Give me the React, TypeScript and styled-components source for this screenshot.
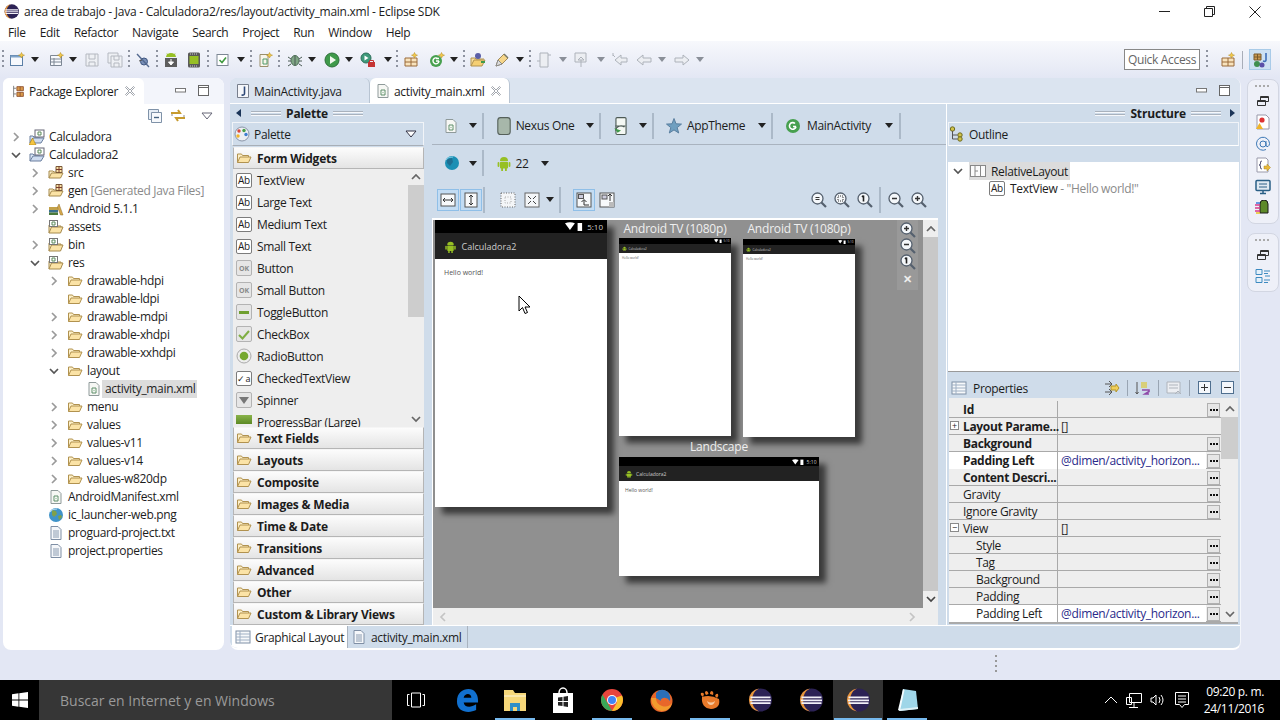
import React from "react";
import styled, { createGlobalStyle } from "styled-components";

const BLUE = "#cfdcea";
const FONT = `"Open Sans", "Liberation Sans", sans-serif`;

const Global = createGlobalStyle`
  html, body { margin: 0; padding: 0; background: #e3e7f4; }
  * { box-sizing: border-box; }
`;

/* ---------- icons ---------- */

const Ic = styled.svg`
  display: block;
  flex-shrink: 0;
`;

const icons: Record<string, React.ReactNode> = {
  folder: (
    <>
      <path d="M1.5 12.5V4h4l1 1.500h6V7" fill="#fdf0c8" stroke="#b1924f" />
      <path d="M1.5 12.5 4 7h11l-2.500 5.500z" fill="#fbe3a6" stroke="#b1924f" />
    </>
  ),
  pkgFolder: (
    <>
      <path d="M1 13V6h4l1 1h7v1" fill="#fdf0c8" stroke="#a68a4d" />
      <path d="M1 13l2.500-5H15l-2.500 5z" fill="#fbe3a6" stroke="#a68a4d" />
      <path d="M8 1.500h6v6H8z" fill="#fbe3a6" stroke="#7a5a3a" />
      <path d="M11 1.500v6M8 4.500h6" stroke="#7a3a2a" />
    </>
  ),
  resFolder: (
    <>
      <path d="M1 14V6h4l1 1h7v1" fill="#fdf0c8" stroke="#a68a4d" />
      <path d="M1 14l2.500-6H15l-2.500 6z" fill="#fbe3a6" stroke="#a68a4d" />
      <rect x="1.500" y="1.500" width="8" height="6" fill="#fff" stroke="#777" />
      <path d="M4 3h3v3H4z" fill="none" stroke="#5a8a5a" />
    </>
  ),
  project: (
    <>
      <path d="M1 14V7h3l1 1h6" fill="#dbe6f4" stroke="#6a7f9f" />
      <path d="M1 14l3-5h11l-3 5z" fill="#cfdcf0" stroke="#6a7f9f" />
      <rect x="6" y="1" width="9" height="7" fill="#fff" stroke="#667" />
      <path d="M9 3h3v3H9z" fill="none" stroke="#5a8a5a" />
    </>
  ),
  projectWarn: (
    <>
      <path d="M1 14V7h3l1 1h6" fill="#dbe6f4" stroke="#6a7f9f" />
      <path d="M1 14l3-5h11l-3 5z" fill="#cfdcf0" stroke="#6a7f9f" />
      <rect x="6" y="1" width="9" height="7" fill="#fff" stroke="#667" />
      <path d="M9 3h3v3H9z" fill="none" stroke="#5a8a5a" />
      <path d="M0 16l3.500-7 3.500 7z" fill="#f5c542" stroke="#a87f10" strokeWidth=".6" />
    </>
  ),
  library: (
    <>
      <path d="M1 6h9v3H1z" fill="#c2a14b" />
      <path d="M1 9h9v2.500H1z" fill="#3a6f8f" />
      <path d="M1 11.500h9V14H1z" fill="#4b7a3a" />
      <path d="M11 3l4 11h-2.500L9.500 6z" fill="#d8a94a" stroke="#8a6a2a" strokeWidth=".5" />
    </>
  ),
  xml: (
    <>
      <path d="M3 1.500h7l3 3v10H3z" fill="#f6f7f4" stroke="#8f9a9a" />
      <path d="M6 7h4v5H6z" fill="none" stroke="#5e8f6a" />
      <path d="M6 9.500h4" stroke="#bcd3be" />
    </>
  ),
  doc: (
    <>
      <path d="M3 1.500h7l3 3v10H3z" fill="#f5f7fa" stroke="#7f8fa5" />
      <path d="M5 6h6M5 8h6M5 10h6M5 12h6" stroke="#8a9bb0" />
    </>
  ),
  globe: (
    <>
      <circle cx="8" cy="8" r="7" fill="#3f93c9" />
      <path d="M4 3l4 1 1 3-3 3-2-2zM10 9l3-1 1 2-3 3z" fill="#7fa04a" />
      <path d="M2 5a7 7 0 0 1 7-3" stroke="#bfe1f2" fill="none" />
    </>
  ),
  earth: (
    <>
      <circle cx="8" cy="8" r="7" fill="#1b8fb4" />
      <path d="M3 4l5-1 1 4-3 4-3-3z" fill="#1e6f92" />
      <path d="M2 5a7 7 0 0 1 7-3" stroke="#7fd0ea" fill="none" />
    </>
  ),
  layoutTree: (
    <>
      <rect x=".5" y="2.500" width="15" height="11" fill="#fbfbfb" stroke="#888" />
      <path d="M5 2.500v11M10.500 2.500v11M5 8h3" stroke="#888" />
    </>
  ),
  outline: (
    <>
      <circle cx="3.500" cy="3" r="2.200" fill="#cfc24a" stroke="#6e6a20" />
      <circle cx="11" cy="9" r="2.200" fill="#cfc24a" stroke="#6e6a20" />
      <circle cx="11" cy="13" r="2.200" fill="#cfc24a" stroke="#6e6a20" />
      <path d="M3.500 5v8h5M3.500 9h5" stroke="#555" fill="none" />
    </>
  ),
  palette: (
    <>
      <circle cx="8" cy="8" r="7" fill="#eceff3" stroke="#8a95a8" />
      <circle cx="5" cy="5" r="1.700" fill="#d9483b" />
      <circle cx="10" cy="4.500" r="1.700" fill="#4aa04a" />
      <circle cx="12" cy="8.500" r="1.700" fill="#3f7fd0" />
      <circle cx="4" cy="10" r="1.700" fill="#f0b429" />
    </>
  ),
  pkgExplorer: (
    <>
      <path d="M2 1v14M2 4h3M2 11h3" stroke="#6b6b6b" fill="none" />
      <path d="M6 2h8v5H6zM6 9h8v5H6z" fill="#d89a4a" stroke="#8a4a2a" />
      <path d="M10 2v5M10 9v5" stroke="#8a4a2a" />
    </>
  ),
  collapse: (
    <>
      <path d="M1.500 1.500h10v10h-10z" fill="#e6edf5" stroke="#7f92a8" />
      <path d="M4.500 4.500h10v10h-10z" fill="#f7f9fc" stroke="#7f92a8" />
      <path d="M7 9.500h5" stroke="#44607f" strokeWidth="1.400" />
    </>
  ),
  link: (
    <>
      <path d="M1 5h9l-2-3M15 10H6l2 3" fill="none" stroke="#c79b2e" strokeWidth="2" />
      <path d="M3 7H1M13 8h2" stroke="#8a8a8a" />
    </>
  ),
  newWin: (
    <>
      <rect x="1.500" y="3.500" width="12" height="10" fill="#f7f9fd" stroke="#5b7fa6" />
      <path d="M1.500 3.500h12v2h-12z" fill="#7fa3c8" />
      <path d="M12.500 .5l1 2 2 .7-2 .8-1 2-1-2-2-.8 2-.7z" fill="#f2c94c" stroke="#b58a1a" strokeWidth=".5" />
    </>
  ),
  newList: (
    <>
      <path d="M2.500 3.500h11v10h-11z" fill="#f7f9fd" stroke="#7d8794" />
      <path d="M6 6v7M2.500 7h11M2.500 10h11" stroke="#7d8794" />
      <path d="M12.500 .5l1 2 2 .7-2 .8-1 2-1-2-2-.8 2-.7z" fill="#f2c94c" stroke="#b58a1a" strokeWidth=".5" />
    </>
  ),
  save: (
    <>
      <path d="M2 2h12v12H2z" fill="#eef0f4" stroke="#b4b8c0" />
      <path d="M5 2v5h6V2M5 14v-4h6v4" fill="none" stroke="#b4b8c0" />
    </>
  ),
  saveAll: (
    <>
      <path d="M1 1h10v10H1z" fill="#eef0f4" stroke="#b4b8c0" />
      <path d="M4 4h11v11H4z" fill="#eef0f4" stroke="#b4b8c0" />
      <path d="M7 4v4h5V4M7 15v-4h5v4" fill="none" stroke="#b4b8c0" />
    </>
  ),
  skip: (
    <>
      <circle cx="9" cy="9.500" r="3.500" fill="#7a90b8" stroke="#3f5680" />
      <path d="M2 2l12 13" stroke="#54698f" strokeWidth="1.400" />
      <path d="M4 9l3-1" stroke="#555" />
    </>
  ),
  sdk: (
    <>
      <path d="M3 5a5 4 0 0 1 10 0z" fill="#97c024" />
      <path d="M4 1.500l1.500 2M12 1.500l-1.500 2" stroke="#97c024" />
      <rect x="2" y="6" width="12" height="9" fill="#5d5d5d" />
      <path d="M8 7v5M5.500 10L8 13l2.500-3z" fill="#fff" stroke="#fff" />
    </>
  ),
  avd: (
    <>
      <rect x="2" y="0.500" width="12" height="15" rx="1.500" fill="#5a5a5a" />
      <rect x="3.500" y="4" width="9" height="8" fill="#97c024" />
      <path d="M4 2h8M4 14h8" stroke="#cfcfcf" strokeDasharray="1 1" />
    </>
  ),
  check: (
    <>
      <rect x="2" y="2.500" width="11" height="11" fill="#fff" stroke="#7d8794" />
      <path d="M4.500 8l2.500 2.500 4-5" stroke="#3f9a3f" strokeWidth="1.600" fill="none" />
    </>
  ),
  newXml: (
    <>
      <path d="M3 2.500h8v12H3z" fill="#f8f5ea" stroke="#9a8f6a" />
      <path d="M6 7h4v5H6z" fill="none" stroke="#4e9a6a" />
      <path d="M12.500 .5l1 2 2 .7-2 .8-1 2-1-2-2-.8 2-.7z" fill="#f2c94c" stroke="#b58a1a" strokeWidth=".5" />
    </>
  ),
  bug: (
    <>
      <ellipse cx="8" cy="8.500" rx="4" ry="5" fill="#7fa585" stroke="#4b6b55" />
      <path d="M1 5l3 2M1 9h3M1 14l3-2M15 5l-3 2M15 9h-3M15 14l-3-2M8 4v9" stroke="#4b5b55" />
    </>
  ),
  run: (
    <>
      <circle cx="8" cy="8" r="7" fill="#3f9a4a" stroke="#2e6f3a" />
      <path d="M6 4l6 4-6 4z" fill="#f2f8ee" />
    </>
  ),
  runExt: (
    <>
      <circle cx="6" cy="6" r="5" fill="#3f9a7a" stroke="#2e6f5a" />
      <path d="M4.500 3.500l4 2.500-4 2.500z" fill="#fff" />
      <rect x="8" y="10" width="7" height="5" fill="#c53434" />
      <path d="M9.500 10V8.500h4V10" stroke="#c53434" fill="none" />
    </>
  ),
  perspective: (
    <>
      <path d="M2 6h12v8H2z" fill="#f8e3bd" stroke="#9a6a3a" />
      <path d="M8 6v8M2 10h12" stroke="#9a6a3a" />
      <path d="M11.500 .5l1 2 2 .7-2 .8-1 2-1-2-2-.8 2-.7z" fill="#f2c94c" stroke="#b58a1a" strokeWidth=".5" />
    </>
  ),
  gNew: (
    <>
      <circle cx="7" cy="9" r="6" fill="#47a04f" />
      <path d="M7 6.500h3M10 9H7M10 9a3 3 0 1 1-1-2.400" stroke="#fff" fill="none" strokeWidth="1.400" />
      <path d="M12.500 .5l1 2 2 .7-2 .8-1 2-1-2-2-.8 2-.7z" fill="#f2c94c" stroke="#b58a1a" strokeWidth=".5" />
    </>
  ),
  gClass: (
    <>
      <circle cx="8" cy="8" r="7" fill="#47a04f" />
      <path d="M11 8.500H8M11 8.500a3.300 3.300 0 1 1-1-3" stroke="#fff" fill="none" strokeWidth="1.600" />
    </>
  ),
  open: (
    <>
      <path d="M1 14V6h4l1 1h8" fill="#f7df9f" stroke="#b1924f" />
      <path d="M1 14l3-6h11l-3 6z" fill="#f5cf73" stroke="#b1924f" />
      <circle cx="8" cy="4" r="3" fill="#5b5fa8" />
      <path d="M11 10h4" stroke="#3f9a4a" strokeWidth="2" />
    </>
  ),
  pencil: (
    <>
      <path d="M2 14l2-6 6-6 4 4-6 6z" fill="#f6d68a" stroke="#a08a5a" />
      <path d="M2 14l2-6 4 4z" fill="#ddd" stroke="#888" />
      <path d="M10 2l4 4" stroke="#776" strokeWidth="1.500" />
    </>
  ),
  navDown: <path d="M4 1h8v14H4zM1 9h3M12 3h3" fill="#eceef2" stroke="#adb2ba" />,
  navUp: (
    <>
      <path d="M2 1h11v9H2z" fill="#eceef2" stroke="#adb2ba" />
      <path d="M8 15V8H5l3-3 3 3H8" fill="#eceef2" stroke="#adb2ba" />
    </>
  ),
  navBack: <path d="M3 8l6-5v3h6v4H9v3zM1 3l2 2M1 1v3" fill="#eceef2" stroke="#adb2ba" />,
  left: <path d="M1 8l6-5v3h8v4H7v3z" fill="#eceef2" stroke="#adb2ba" />,
  right: <path d="M15 8L9 3v3H1v4h8v3z" fill="#eceef2" stroke="#adb2ba" />,
  javaPersp: (
    <>
      <path d="M2 2h7v6H2z" fill="#c99a52" stroke="#7a5a2a" />
      <path d="M5.500 2v6M2 5h7" stroke="#7a5a2a" />
      <circle cx="5" cy="12" r="3" fill="#3f8f4f" />
      <circle cx="10" cy="13" r="2.500" fill="#5a4fa8" />
      <path d="M14 1v7q0 2-3 1" stroke="#3f6fb8" strokeWidth="1.600" fill="none" />
    </>
  ),
  java: (
    <>
      <path d="M2.500 1.500h11v13h-11z" fill="#f5f7fa" stroke="#777f8c" />
      <path d="M9.500 3.500v7q0 2-3 1.500" stroke="#2f4a78" strokeWidth="1.600" fill="none" />
    </>
  ),
  phone: <rect x="2.500" y=".5" width="11" height="15" rx="2.500" fill="#a7b7aa" stroke="#55605a" />,
  rotate: (
    <>
      <rect x="3.500" y=".5" width="9" height="15" rx="1" fill="#f4f8f4" stroke="#4d5a55" />
      <path d="M3 8h9M3 12a5 5 0 0 1 8-3" stroke="#4d5a55" fill="none" />
      <path d="M2 10l3 4 3-2" fill="#3f9a4a" />
    </>
  ),
  star: (
    <path d="M8 .5l2 5.300 5.500.3-4.300 3.500 1.500 5.400L8 11.900l-4.700 3.100 1.500-5.400L.5 6.100 6 5.800z" fill="#6f9fc0" stroke="#5a7f9f" />
  ),
  android: (
    <>
      <path d="M4 6a4 4 0 0 1 8 0z" fill="#97c024" />
      <rect x="4" y="6.800" width="8" height="6.700" rx="1" fill="#97c024" />
      <rect x="1.600" y="7" width="1.800" height="5" rx=".9" fill="#97c024" />
      <rect x="12.600" y="7" width="1.800" height="5" rx=".9" fill="#97c024" />
      <rect x="5.200" y="13" width="1.800" height="3" fill="#97c024" />
      <rect x="9" y="13" width="1.800" height="3" fill="#97c024" />
    </>
  ),
  fitH: (
    <>
      <rect x="1" y="2" width="14" height="12" fill="#f7f9fb" stroke="#555" />
      <path d="M3 8h10M3 8l2-2M3 8l2 2M13 8l-2-2M13 8l-2 2" stroke="#333" fill="none" />
    </>
  ),
  fitV: (
    <>
      <rect x="2" y="1" width="12" height="14" fill="#f7f9fb" stroke="#555" />
      <path d="M8 3v10M8 3L6 5M8 3l2 2M8 13l-2-2M8 13l2-2" stroke="#333" fill="none" />
    </>
  ),
  marquee: (
    <>
      <rect x="1" y="1" width="14" height="14" fill="#f4f6f8" stroke="#666" strokeDasharray="1 1.500" />
      <path d="M5 5h6v6H5z" fill="none" stroke="#aaa" strokeDasharray="1 1.500" />
    </>
  ),
  expand: (
    <>
      <rect x="1" y="1" width="14" height="14" fill="#f4f6f8" stroke="#666" />
      <path d="M4 4l3 3M12 4L9 7M4 12l3-3M12 12L9 9" stroke="#444" />
    </>
  ),
  parent: (
    <>
      <rect x="1" y="1" width="14" height="14" fill="#f7f9fb" stroke="#555" />
      <rect x="2.500" y="2.500" width="5" height="4" fill="#ccd" stroke="#555" />
      <path d="M8 13V8M5.500 10L8 7.500 10.500 10M8 13h5" stroke="#333" fill="none" />
    </>
  ),
  parent2: (
    <>
      <rect x="1" y="1" width="14" height="14" fill="#f7f9fb" stroke="#555" />
      <rect x="3" y="3" width="5" height="4" fill="#ccd" stroke="#555" />
      <rect x="10" y="10" width="5" height="5" fill="#bbb" />
      <path d="M11 9V2M9 4l2-2 2 2" stroke="#333" fill="none" />
    </>
  ),
  zoomEq: <ZoomShape><path d="M4.500 5.500h4M4.500 7.500h4" stroke="#333" strokeWidth="1.200" /></ZoomShape>,
  zoomFit: <ZoomShape><path d="M4 4h5v5H4z" stroke="#333" strokeDasharray="1 1" fill="none" /></ZoomShape>,
  zoomOne: <ZoomShape><path d="M6.500 3.500v6M5 5l1.500-1.500" stroke="#222" strokeWidth="1.600" fill="none" /></ZoomShape>,
  zoomOut: <ZoomShape><path d="M4 6.500h5" stroke="#333" strokeWidth="1.400" /></ZoomShape>,
  zoomIn: <ZoomShape><path d="M4 6.500h5M6.500 4v5" stroke="#333" strokeWidth="1.400" /></ZoomShape>,
  propList: (
    <>
      <rect x="1" y="2" width="14" height="12" fill="#f7f9fb" stroke="#7f8fa5" />
      <path d="M1 5h14M1 8h14M1 11h14M5 2v12" stroke="#9fb0c4" />
    </>
  ),
  propSwap: (
    <>
      <path d="M1 4h6M1 12h6M5 1l3 3-3 3M5 9l3 3-3 3" stroke="#555" fill="none" />
      <path d="M7 6h5V4l3 4-3 4v-2H7z" fill="#f0cf5a" stroke="#b3952a" />
    </>
  ),
  propSort: (
    <>
      <path d="M2 2v12M2 14l-1.500-2M2 14l1.500-2" stroke="#555" fill="none" />
      <path d="M6 2h6v6H6z" fill="#d8cf7a" />
      <path d="M7 10h7v1.500l-4 2.500h4" stroke="#8f4aa8" strokeWidth="1.600" fill="none" />
    </>
  ),
  propUndo: (
    <>
      <path d="M1 2h13v11H1z" fill="#eceef2" stroke="#aeb4bc" />
      <path d="M3 5h9M3 8h9M9 14l3-3 3 3" stroke="#aeb4bc" fill="none" />
    </>
  ),
  plusBox: (
    <>
      <rect x="1.500" y="1.500" width="12" height="12" fill="#f4f7fb" stroke="#4f6f8f" />
      <path d="M4 7.500h7M7.500 4v7" stroke="#333" />
    </>
  ),
  minusBox: (
    <>
      <rect x="1.500" y="1.500" width="12" height="12" fill="#f4f7fb" stroke="#4f6f8f" />
      <path d="M4 7.500h7" stroke="#333" />
    </>
  ),
  restoreSmall: (
    <>
      <path d="M5.500 3.500h8v5h-8z" fill="none" stroke="#333" />
      <path d="M2.500 7.500h8v5h-8z" fill="#eef0f8" stroke="#333" />
      <path d="M2.500 8.500h8M5.500 4.500h8" stroke="#333" />
    </>
  ),
  problems: (
    <>
      <path d="M2 1h9l3 3v11H2z" fill="#fff" stroke="#99a" />
      <circle cx="7" cy="6" r="2.600" fill="#d33" />
      <path d="M1 15l3.500-6L8 15z" fill="#f0b429" />
    </>
  ),
  at: (
    <>
      <circle cx="8" cy="8" r="3" fill="none" stroke="#3d78b5" />
      <path d="M11 5v4q0 2 2 1.500 1.500-1 1.500-3A6.500 6.500 0 1 0 11 13.500" fill="none" stroke="#3d78b5" />
    </>
  ),
  javadoc: (
    <>
      <path d="M2 1h9l2 2v12H2z" fill="#fff" stroke="#99a" />
      <path d="M7 4Q5 4 5.500 6T4 8q2 0 1.500 2T7 12" stroke="#557" fill="none" />
      <path d="M9 9h3V7l3.500 3.500L12 14v-2H9z" fill="#e9b93a" stroke="#a8862a" strokeWidth=".5" />
    </>
  ),
  console: (
    <>
      <rect x="1" y="1.500" width="14" height="10" rx="1" fill="#dfe9f2" stroke="#2a5f86" strokeWidth="1.500" />
      <path d="M4 5h8M4 8h8" stroke="#2a5f86" />
      <path d="M5 14.500h6M8 12v2" stroke="#2a5f86" strokeWidth="1.500" />
    </>
  ),
  logcat: (
    <>
      <path d="M5 4a4 4 0 0 1 8 0v9H5z" fill="#5e8a2a" stroke="#1a1a1a" />
      <path d="M0 5h5M0 8h5M0 11h5" stroke="#d83a8a" strokeWidth="1.600" />
      <path d="M1 3h4" stroke="#3a7ad8" strokeWidth="1.500" />
      <path d="M1 13h4" stroke="#e8c020" strokeWidth="1.500" />
    </>
  ),
  tasks: (
    <>
      <path d="M1 1.500h6v5H1zM1 9.500h6v5H1z" fill="#e4f0fa" stroke="#3d8ac0" />
      <path d="M9 3h6M9 5.500h4M10 8h5M9 12h6M9 14.500h4" stroke="#3d8ac0" />
    </>
  ),
  winLogo: (
    <path d="M0 2.200l6.500-.9v6.300H0zM7.300 1.200L16 0v7.600H7.300zM0 8.400h6.500v6.300L0 13.800zM7.300 8.400H16V16l-8.700-1.200z" fill="#fff" />
  ),
};

function ZoomShape({ children }: { children: React.ReactNode }) {
  return (
    <>
      <path d="M10 10l5 5" stroke="#55606e" strokeWidth="2.200" />
      <circle cx="6.500" cy="6.500" r="5.500" fill="#f4f7fa" stroke="#55606e" strokeWidth="1.300" />
      {children}
    </>
  );
}

const Icon = ({ n, s = 16 }: { n: string; s?: number }) => (
  <Ic width={s} height={s} viewBox="0 0 16 16">
    {icons[n]}
  </Ic>
);

const Chevron = ({ open, color = "#8c8c8c" }: { open?: boolean; color?: string }) => (
  <Ic width={12} height={12} viewBox="0 0 12 12">
    <path d={open ? "M2 4l4 4 4-4" : "M4 2l4 4-4 4"} fill="none" stroke={color} strokeWidth="1.700" />
  </Ic>
);

const ChevronUp = ({ color = "#666" }: { color?: string }) => (
  <Ic width={12} height={12} viewBox="0 0 12 12">
    <path d="M2 8l4-4 4 4" fill="none" stroke={color} strokeWidth="1.700" />
  </Ic>
);

const ChevronLeft = ({ color = "#c4c4c4" }: { color?: string }) => (
  <Ic width={12} height={12} viewBox="0 0 12 12">
    <path d="M8 2L4 6l4 4" fill="none" stroke={color} strokeWidth="1.700" />
  </Ic>
);

const Drop = ({ grey }: { grey?: boolean }) => (
  <Ic width={8} height={5} viewBox="0 0 8 5">
    <path d="M0 0h8L4 5z" fill={grey ? "#8a8f98" : "#222"} />
  </Ic>
);

const CloseX = () => (
  <Ic width={12} height={12} viewBox="0 0 12 12">
    <path d="M1.500 2.500l1-1L6 5l3.500-3.500 1 1L7 6l3.500 3.500-1 1L6 7l-3.500 3.500-1-1L5 6z" fill="#fff" stroke="#8a8f98" strokeWidth=".8" />
  </Ic>
);

const MinMax = () => (
  <MinMaxRow>
    <Ic width={12} height={6} viewBox="0 0 12 6">
      <rect x=".5" y=".5" width="10" height="3.500" fill="#fff" stroke="#777" />
    </Ic>
    <Ic width={12} height={12} viewBox="0 0 12 12">
      <rect x=".5" y=".5" width="10" height="10" fill="#fff" stroke="#666" />
      <path d="M.5 2.500h10" stroke="#666" />
    </Ic>
  </MinMaxRow>
);

const EclipseMark = ({ s }: { s: number }) => (
  <Ic width={s} height={s} viewBox="0 0 24 24">
    <circle cx="12.500" cy="12" r="11.500" fill="#2c2255" />
    <path d="M11 0.500A11.600 11.600 0 0 0 11 23.500 13 13 0 0 1 11 .500z" fill="#e8963a" />
    <path d="M2.500 8.500h20v1.800h-20zM2 11.400h21v1.800H2zM2.500 14.300h20v1.800h-20z" fill="#f2f0f8" />
  </Ic>
);

const StatusIcons = ({ h }: { h: number }) => (
  <Ic width={h * 2} height={h} viewBox="0 0 20 10">
    <path d="M0 1.500Q5.500-1 11 1.500L5.500 9z" fill="#fff" />
    <path d="M14 1h5v9h-5z" fill="#fff" />
  </Ic>
);

const Cursor = () => (
  <CursorBox>
    <svg width="13" height="20" viewBox="0 0 13 20">
      <path d="M1 1v15l3.500-3.500L7 18.500l2.500-1L7 12h5z" fill="#fff" stroke="#000" />
    </svg>
  </CursorBox>
);

/* ---------- data ---------- */

type TreeItem = { d: number; c?: "o" | "c"; i: string; t: string; x?: string; sel?: boolean };
const tree: TreeItem[] = [
  { d: 0, c: "c", i: "projectWarn", t: "Calculadora" },
  { d: 0, c: "o", i: "project", t: "Calculadora2" },
  { d: 1, c: "c", i: "pkgFolder", t: "src" },
  { d: 1, c: "c", i: "pkgFolder", t: "gen", x: " [Generated Java Files]" },
  { d: 1, c: "c", i: "library", t: "Android 5.1.1" },
  { d: 1, i: "resFolder", t: "assets" },
  { d: 1, c: "c", i: "resFolder", t: "bin" },
  { d: 1, c: "o", i: "resFolder", t: "res" },
  { d: 2, c: "c", i: "folder", t: "drawable-hdpi" },
  { d: 2, i: "folder", t: "drawable-ldpi" },
  { d: 2, c: "c", i: "folder", t: "drawable-mdpi" },
  { d: 2, c: "c", i: "folder", t: "drawable-xhdpi" },
  { d: 2, c: "c", i: "folder", t: "drawable-xxhdpi" },
  { d: 2, c: "o", i: "folder", t: "layout" },
  { d: 3, i: "xml", t: "activity_main.xml", sel: true },
  { d: 2, c: "c", i: "folder", t: "menu" },
  { d: 2, c: "c", i: "folder", t: "values" },
  { d: 2, c: "c", i: "folder", t: "values-v11" },
  { d: 2, c: "c", i: "folder", t: "values-v14" },
  { d: 2, c: "c", i: "folder", t: "values-w820dp" },
  { d: 1, i: "xml", t: "AndroidManifest.xml" },
  { d: 1, i: "globe", t: "ic_launcher-web.png" },
  { d: 1, i: "doc", t: "proguard-project.txt" },
  { d: 1, i: "doc", t: "project.properties" },
];

const widgets: [string, string][] = [
  ["ab", "TextView"],
  ["ab", "Large Text"],
  ["ab", "Medium Text"],
  ["ab", "Small Text"],
  ["ok", "Button"],
  ["ok", "Small Button"],
  ["toggle", "ToggleButton"],
  ["checkbox", "CheckBox"],
  ["radio", "RadioButton"],
  ["checked", "CheckedTextView"],
  ["spinner", "Spinner"],
  ["bar", "ProgressBar (Large)"],
];

const categories = ["Text Fields", "Layouts", "Composite", "Images & Media", "Time & Date", "Transitions", "Advanced", "Other", "Custom & Library Views"];

type Prop = { t: string; b?: boolean; v?: string; tree?: "+" | "-"; indent?: boolean; noBtn?: boolean };
const DIMEN = "@dimen/activity_horizon...";
const props: Prop[] = [
  { t: "Id", b: true },
  { t: "Layout Parame...", b: true, tree: "+", v: "[]", noBtn: true },
  { t: "Background", b: true },
  { t: "Padding Left", b: true, v: DIMEN },
  { t: "Content Descri...", b: true },
  { t: "Gravity" },
  { t: "Ignore Gravity" },
  { t: "View", tree: "-", v: "[]", noBtn: true },
  { t: "Style", indent: true },
  { t: "Tag", indent: true },
  { t: "Background", indent: true },
  { t: "Padding", indent: true },
  { t: "Padding Left", indent: true, v: DIMEN },
];

// [center x, content]: each slot runs from its own center to the next one
type Tool = [number, React.ReactNode];
const I = (n: string) => <Icon n={n} />;
const D = <Drop />;
const G = <Drop grey />;
const V = <Grip />;
const S = <Sep />;
const L = (t: string) => <Label t={t} />;
const on = (n: string) => <On n={n} />;

function Grip() {
  return <GripDots />;
}
function Sep() {
  return <ToolSep />;
}
function Label({ t }: { t: string }) {
  return <ToolLabel>{t}</ToolLabel>;
}
function On({ n }: { n: string }) {
  return (
    <ToggleOn>
      <Icon n={n} />
    </ToggleOn>
  );
}

const mainTools: Tool[] = [
  [3, V], [17, I("newWin")], [35, D], [56, I("newList")], [73, D], [92, I("save")], [115, I("saveAll")],
  [129, V], [143, I("skip")], [157, V], [171, I("sdk")], [194, I("avd")], [208, V], [223, I("check")],
  [241, D], [251, V], [265, I("newXml")], [279, V], [295, I("bug")], [312, D], [332, I("run")], [349, D],
  [368, I("runExt")], [388, D], [397, V], [411, I("perspective")], [437, I("gNew")], [454, D], [464, V],
  [478, I("open")], [502, I("pencil")], [520, D], [530, V], [544, I("navDown")], [563, G], [581, I("navUp")],
  [601, G], [620, I("navBack")], [644, I("left")], [662, G], [682, I("right")], [700, G],
];

const rowOne: Tool[] = [
  [451, I("xml")], [473, D], [483, S], [504, <Icon n="phone" s={18} />], [545, L("Nexus One")], [590, D], [600, S],
  [621, <Icon n="rotate" s={18} />], [643, D], [653, S], [674, I("star")], [716, L("AppTheme")], [762, D], [772, S],
  [793, I("gClass")], [839, L("MainActivity")], [889, D], [900, S],
];
const rowTwo: Tool[] = [
  [452, I("earth")], [473, D], [483, S], [504, I("android")], [522, L("22")], [545, D],
];
const rowThree: Tool[] = [
  [448, on("fitH")], [471, on("fitV")], [484, S], [508, I("marquee")], [532, I("expand")], [550, D], [560, S],
  [584, on("parent")], [607, I("parent2")], [819, I("zoomEq")], [842, I("zoomFit")], [865, I("zoomOne")],
  [880, S], [896, I("zoomOut")], [919, I("zoomIn")],
];

const ToolRow = ({ items, origin }: { items: Tool[]; origin: number }) => (
  <>
    <Slot $w={items[0][0] - origin} />
    {items.map(([c, el], i) => (
      <Slot key={i} $w={i === items.length - 1 ? 0 : items[i + 1][0] - c}>
        {el}
      </Slot>
    ))}
  </>
);

type Task = { n: React.ReactNode; w: number; on?: boolean; line?: number };
const taskIcons: Task[] = [
  { w: 48, n: <Ic width={18} height={16} viewBox="0 0 18 16"><path d="M4.500 1h9v14h-9zM2.500 2.500H0.500v11h2M15.500 2.500h2v11h-2" fill="none" stroke="#fff" /></Ic> },
  {
    w: 54,
    n: (
      <Ic width={23} height={25} viewBox="0 0 24 26">
        <path d="M1 14C1 5 7 1 13 1s10 5 10 12v2H8c.5 5 7 6 13 2v6c-8 4-20 2-20-9zM8 10h8c0-5-7-5-8 0z" fill="#1170cf" />
      </Ic>
    ),
  },
  {
    w: 42,
    line: 40,
    n: (
      <Ic width={22} height={22} viewBox="0 0 22 22">
        <path d="M0 1h9l2 3h11v18H0z" fill="#f5d77a" />
        <path d="M6 14h10v8h-3v-4H9v4H6z" fill="#2d8fc8" />
        <path d="M0 6h22v2H0z" fill="#f9e7ad" />
      </Ic>
    ),
  },
  {
    w: 54,
    n: (
      <Ic width={20} height={26} viewBox="0 0 20 26">
        <path d="M6 6a4 5 0 0 1 8 0" fill="none" stroke="#fff" strokeWidth="1.500" />
        <path d="M0 6h20v20H0z" fill="#fff" />
        <path d="M5 10.500l4.500-.6v4H5zM10.500 9.800L15 9v5h-4.500zM5 15h4.500v4L5 18.500zM10.500 15H15v5l-4.500-.7z" fill="#222" />
      </Ic>
    ),
  },
  {
    w: 44,
    line: 40,
    n: (
      <Ic width={22} height={22} viewBox="0 0 22 22">
        <circle cx="11" cy="11" r="11" fill="#e8453c" />
        <path d="M11 22A11 11 0 0 1 1.500 5.500l5 8.500z" fill="#3aa757" />
        <path d="M21 6.500A11 11 0 0 1 11 22l5-8.500-1-5z" fill="#fbc02d" />
        <circle cx="11" cy="11" r="5" fill="#fff" />
        <circle cx="11" cy="11" r="4" fill="#4285f4" />
      </Ic>
    ),
  },
  {
    w: 54,
    n: (
      <Ic width={23} height={24} viewBox="0 0 23 24">
        <circle cx="11.500" cy="13" r="11" fill="#e8662a" />
        <path d="M6 5q5-6 12-1 3 4 2 9-3-4-7-3-3 1-2 3l-5-3z" fill="#2a6fb8" />
        <path d="M1 10q1 12 11 13 8 0 10-8-4 5-10 3-6-2-6-8z" fill="#f29b2e" />
      </Ic>
    ),
  },
  {
    w: 44,
    line: 40,
    n: (
      <Ic width={21} height={20} viewBox="0 0 21 20">
        <path d="M3 7q-3-2-2-4 2-1 3 1M6 5q-2-3 0-4 2 0 2.500 3M10 4q0-3 2-3 2 1 1 4M15 6q1-3 3-2 1 2-1 4M2 7q8-3 17 2 2 9-8 10Q1 18 2 7z" fill="#e87a2a" />
        <path d="M7 11q4 3 8 0-1 4-4 4t-4-4z" fill="#f5c9a0" />
      </Ic>
    ),
  },
  { w: 56, n: <EclipseMark s={24} /> },
  { w: 45, n: <EclipseMark s={24} /> },
  { w: 50, on: true, line: 48, n: <EclipseMark s={24} /> },
  {
    w: 48,
    line: 40,
    n: (
      <Ic width={24} height={24} viewBox="0 0 24 24">
        <path d="M8 1l13 2 2 18-19 2z" fill="#9fd6e8" />
        <path d="M8 1L3 22l2 1L9.500 2z" fill="#f4fbfd" />
        <path d="M5 23l18-2v-2L5 21z" fill="#dff1f6" />
      </Ic>
    ),
  },
];

/* ---------- app ---------- */

const MiniDevice = ({ x, y, w, h, big, mid }: { x: number; y: number; w: number; h: number; big?: boolean; mid?: boolean }) => {
  const status = big ? 13 : mid ? 9 : 6;
  const fs = big ? 8 : mid ? 5 : 3;
  return (
    <Device $x={x} $y={y} $w={w} $h={h}>
      <Status $h={status} $fs={fs}>
        <StatusIcons h={big ? 9 : mid ? 6 : 4} />
        <span>5:10</span>
      </Status>
      <ActionBar $h={big ? 26 : mid ? 15 : 9} $fs={big ? 9 : fs} $pad={big ? 9 : mid ? 6 : 3}>
        <Icon n="android" s={big ? 13 : mid ? 8 : 5} /> Calculadora2
      </ActionBar>
      <Hello $fs={big ? 7 : fs} $pad={big ? 9 : mid ? 6 : 3} $top={big ? 10 : mid ? 6 : 3}>
        Hello world!
      </Hello>
    </Device>
  );
};

const App = () => (
  <>
    <Global />
    <Page>
      <TitleBar>
        <EclipseMark s={15} />
        <TitleText>area de trabajo - Java - Calculadora2/res/layout/activity_main.xml - Eclipse SDK</TitleText>
        <WinControls>
          <WinBtn>
            <svg width="11" height="11" viewBox="0 0 11 11"><path d="M0 5.500h11" stroke="#222" /></svg>
          </WinBtn>
          <WinBtn>
            <svg width="11" height="11" viewBox="0 0 11 11"><path d="M.5 2.500h8v8h-8zM2.500 2.500v-2h8v8h-2" fill="none" stroke="#222" /></svg>
          </WinBtn>
          <WinBtn>
            <svg width="12" height="12" viewBox="0 0 12 12"><path d="M.5.500l11 11M11.500.500l-11 11" stroke="#222" /></svg>
          </WinBtn>
        </WinControls>
      </TitleBar>

      <MenuBar>
        {["File", "Edit", "Refactor", "Navigate", "Search", "Project", "Run", "Window", "Help"].map((m) => (
          <span key={m}>{m}</span>
        ))}
      </MenuBar>

      <MainToolbar>
        <ToolRow items={mainTools} origin={0} />
        <ToolbarRight>
          <QuickAccess>Quick Access</QuickAccess>
          <Grip />
          <Icon n="perspective" />
          <ToolSepShort />
          <PerspectiveOn>
            <Icon n="javaPersp" />
          </PerspectiveOn>
        </ToolbarRight>
      </MainToolbar>

      <Workspace>
        <ExplorerPanel>
          <ExplorerHead>
            <ExplorerTab>
              <Icon n="pkgExplorer" s={13} />
              <span>Package Explorer</span>
              <CloseX />
            </ExplorerTab>
            <MinMax />
          </ExplorerHead>
          <ExplorerTools>
            <Icon n="collapse" />
            <Icon n="link" />
            <Ic width={12} height={8} viewBox="0 0 12 8">
              <path d="M1 1h10L6 7z" fill="#fff" stroke="#667" />
            </Ic>
          </ExplorerTools>
          <Tree>
            {tree.map((r) => (
              <TreeRow key={r.t + r.d} $d={r.d}>
                <TreeChevron>{r.c && <Chevron open={r.c === "o"} color={r.c === "o" ? "#555" : "#9a9a9a"} />}</TreeChevron>
                <Icon n={r.i} />
                <TreeLabel $sel={r.sel}>
                  {r.t}
                  {r.x && <Muted>{r.x}</Muted>}
                </TreeLabel>
              </TreeRow>
            ))}
          </Tree>
        </ExplorerPanel>

        <EditorPanel>
          <EditorTabs>
            <EditorTab>
              <Icon n="java" />
              <span>MainActivity.java</span>
            </EditorTab>
            <EditorTab $active>
              <Icon n="xml" />
              <span>activity_main.xml</span>
              <CloseX />
            </EditorTab>
            <TabFill />
            <EditorMinMax>
              <MinMax />
            </EditorMinMax>
          </EditorTabs>

          <EditorBody>
            <PaletteCol>
              <PaneHead>
                <ArrowL />
                <GripLines />
                <b>Palette</b>
                <GripLines />
              </PaneHead>
              <PaletteTitle>
                <Icon n="palette" />
                <span>Palette</span>
                <Ic width={12} height={8} viewBox="0 0 12 8">
                  <path d="M1 1h10L6 7z" fill="#fff" stroke="#334" />
                </Ic>
              </PaletteTitle>
              <PaletteStack>
                <Category>
                  <Icon n="folder" />
                  Form Widgets
                </Category>
                <WidgetArea>
                  <WidgetList>
                    {widgets.map(([k, t]) => (
                      <WidgetRow key={t}>
                        <WidgetIcon k={k} />
                        {t}
                      </WidgetRow>
                    ))}
                  </WidgetList>
                  <Scroll>
                    <ScrollArrow>
                      <ChevronUp />
                    </ScrollArrow>
                    <ScrollArrow>
                      <Chevron open color="#666" />
                    </ScrollArrow>
                  </Scroll>
                </WidgetArea>
                {categories.map((c) => (
                  <Category key={c}>
                    <Icon n="folder" />
                    {c}
                  </Category>
                ))}
              </PaletteStack>
            </PaletteCol>

            <DesignerCol>
              <DesignRow $h={38} $line>
                <ToolRow items={rowOne} origin={432} />
              </DesignRow>
              <DesignRow $h={36}>
                <ToolRow items={rowTwo} origin={432} />
              </DesignRow>
              <DesignRow $h={37}>
                <ToolRow items={rowThree} origin={432} />
              </DesignRow>
              <CanvasFrame>
                <CanvasMain>
                  <Canvas>
                    <MiniDevice big x={2} y={0} w={172} h={287} />
                    <DeviceLabel $x={186} $y={1} $w={112}>Android TV (1080p)</DeviceLabel>
                    <MiniDevice x={186} y={18} w={112} h={198} />
                    <DeviceLabel $x={310} $y={1} $w={112}>Android TV (1080p)</DeviceLabel>
                    <MiniDevice x={310} y={19} w={112} h={198} />
                    <DeviceLabel $x={186} $y={219} $w={200}>Landscape</DeviceLabel>
                    <MiniDevice mid x={186} y={237} w={200} h={119} />
                    <ZoomPad>
                      <Icon n="zoomIn" />
                      <Icon n="zoomOut" />
                      <Icon n="zoomOne" />
                      <PadClose>✕</PadClose>
                    </ZoomPad>
                    <Cursor />
                  </Canvas>
                  <CanvasScroll>
                    <ChevronUp />
                    <ThumbFill />
                    <Chevron open color="#444" />
                  </CanvasScroll>
                </CanvasMain>
                <HScroll>
                  <ChevronLeft />
                  <Chevron color="#c4c4c4" />
                </HScroll>
              </CanvasFrame>
            </DesignerCol>

            <RightCol>
              <PaneHead $right>
                <GripLines />
                <b>Structure</b>
                <GripLines />
                <ArrowR />
              </PaneHead>
              <OutlineHead>
                <Icon n="outline" />
                <span>Outline</span>
              </OutlineHead>
              <OutlineBody>
                <OutlineBand />
                <OutlineRow $first>
                  <Chevron open color="#555" />
                  <OutlineSel>
                    <Icon n="layoutTree" />
                    RelativeLayout
                  </OutlineSel>
                </OutlineRow>
                <OutlineRow>
                  <AbBox>Ab</AbBox>
                  <span>
                    TextView <Muted>- "Hello world!"</Muted>
                  </span>
                </OutlineRow>
              </OutlineBody>
              <PropHead>
                <Icon n="propList" />
                <span>Properties</span>
                <PropTools>
                  <Icon n="propSwap" />
                  <PropSep />
                  <Icon n="propSort" />
                  <PropSep />
                  <Icon n="propUndo" />
                  <PropSep />
                  <Icon n="plusBox" />
                  <Icon n="minusBox" />
                </PropTools>
              </PropHead>
              <PropTable>
                <PropRows>
                  {props.map((p, i) => (
                    <PropRow key={i}>
                      <PropName $b={p.b} $indent={p.indent} $white={p.t === "Padding Left"}>
                        {p.tree && <TreeBox>{p.tree === "+" ? "+" : "−"}</TreeBox>}
                        {p.t}
                      </PropName>
                      <PropValue $white={p.t === "Padding Left"}>{p.v}</PropValue>
                      <PropBtn>
                        {!p.noBtn && (
                          <DotBtn>
                            <Dots />
                          </DotBtn>
                        )}
                      </PropBtn>
                    </PropRow>
                  ))}
                </PropRows>
                <PropScroll>
                  <ScrollArrow>
                    <ChevronUp />
                  </ScrollArrow>
                  <ScrollArrow>
                    <Chevron open color="#666" />
                  </ScrollArrow>
                </PropScroll>
              </PropTable>
            </RightCol>
          </EditorBody>

          <BottomTabs>
            <BottomTab $active>
              <Icon n="propList" />
              Graphical Layout
            </BottomTab>
            <BottomTab>
              <Icon n="doc" />
              activity_main.xml
            </BottomTab>
          </BottomTabs>
        </EditorPanel>

        <TrimCol>
          <TrimGroup>
            <TrimDots />
            <Icon n="restoreSmall" />
            <Icon n="problems" />
            <Icon n="at" />
            <Icon n="javadoc" />
            <Icon n="console" />
            <Icon n="logcat" />
          </TrimGroup>
          <TrimGroup>
            <TrimDots />
            <Icon n="restoreSmall" />
            <Icon n="tasks" />
          </TrimGroup>
        </TrimCol>
      </Workspace>

      <StatusStrip>
        <StatusGrip />
      </StatusStrip>

      <Taskbar>
        <StartBtn>
          <Icon n="winLogo" />
        </StartBtn>
        <SearchBox>Buscar en Internet y en Windows</SearchBox>
        {taskIcons.map((t, i) => (
          <TaskSlot key={i} $w={t.w} $on={t.on} $line={t.line}>
            {t.n}
          </TaskSlot>
        ))}
        <Tray>
          <Ic width={14} height={8} viewBox="0 0 14 8">
            <path d="M1 7l6-6 6 6" fill="none" stroke="#fff" />
          </Ic>
          <Ic width={16} height={16} viewBox="0 0 16 16">
            <path d="M3.500 1.500h12v9h-12zM.5 5.500h5v7h-5zM3 15.500h9M8 10.500v5" fill="#000" stroke="#fff" />
          </Ic>
          <Ic width={16} height={16} viewBox="0 0 16 16">
            <path d="M1 6h2l3-3v10l-3-3H1zM9 5q2 3 0 6M11 3q4 5 0 10" fill="none" stroke="#fff" />
          </Ic>
          <Ic width={16} height={18} viewBox="0 0 16 18">
            <path d="M1.500 1.500h13v12h-4l-2.500 3-2.500-3h-4zM4 5h8M4 8h8M4 11h8" fill="none" stroke="#fff" />
          </Ic>
          <Clock>
            <span>09:20 p. m.</span>
            <span>24/11/2016</span>
          </Clock>
        </Tray>
      </Taskbar>
    </Page>
  </>
);

export default App;

function WidgetIcon({ k }: { k: string }) {
  if (k === "ab") return <AbBox>Ab</AbBox>;
  if (k === "ok") return <OkBox>OK</OkBox>;
  if (k === "toggle")
    return (
      <OkBox>
        <ToggleBar />
      </OkBox>
    );
  if (k === "checkbox")
    return (
      <OkBox>
        <svg width="12" height="11" viewBox="0 0 12 11">
          <path d="M1 6l3.500 3.500L11 2" fill="none" stroke="#7fae42" strokeWidth="2" />
        </svg>
      </OkBox>
    );
  if (k === "radio")
    return (
      <Ic width={16} height={16} viewBox="0 0 16 16">
        <circle cx="8" cy="8" r="7" fill="#eee" stroke="#aaa" />
        <circle cx="8" cy="8" r="4.300" fill="#76a82f" />
      </Ic>
    );
  if (k === "checked") return <CheckedBox>✓a</CheckedBox>;
  if (k === "spinner")
    return (
      <OkBox>
        <svg width="10" height="7" viewBox="0 0 10 7">
          <path d="M0 0h10L5 7z" fill="#777" />
        </svg>
      </OkBox>
    );
  return <ProgressIcon />;
}

/* ---------- styles ---------- */

const Page = styled.div`
  width: 1280px;
  height: 720px;
  display: flex;
  flex-direction: column;
  overflow: hidden;
  background: #e3e7f4;
  color: #1c1c1c;
  font-family: ${FONT};
  font-size: 12px;
  letter-spacing: -0.33px;
`;

const TitleBar = styled.div`
  height: 23px;
  background: #fff;
  display: flex;
  align-items: center;
  padding-left: 4px;
`;

const TitleText = styled.div`
  margin-left: 5px;
  font-size: 12px;
  letter-spacing: -0.26px;
  white-space: nowrap;
`;

const WinControls = styled.div`
  margin-left: auto;
  margin-right: 3px;
  display: flex;
`;

const WinBtn = styled.div`
  width: 45px;
  height: 23px;
  display: flex;
  align-items: center;
  justify-content: center;
`;

const MenuBar = styled.div`
  height: 18px;
  background: #fff;
  display: flex;
  align-items: center;
  gap: 14px;
  padding-left: 8px;
`;

const MainToolbar = styled.div`
  height: 37px;
  display: flex;
  align-items: center;
  background: linear-gradient(#f7f8fc, #e3e7f4);
`;

const ToolbarRight = styled.div`
  margin-left: auto;
  display: flex;
  align-items: center;
  gap: 6px;
  padding-right: 9px;

  & > :nth-child(2) {
    margin-right: 6px;
  }
`;

const QuickAccess = styled.div`
  width: 76px;
  height: 21px;
  background: #fff;
  border: 1px solid #888;
  display: flex;
  align-items: center;
  justify-content: center;
  color: #666;
  white-space: nowrap;
`;

const ToolSepShort = styled.div`
  width: 1px;
  height: 18px;
  background: #a8adb8;
`;

const PerspectiveOn = styled.div`
  width: 22px;
  height: 21px;
  display: flex;
  align-items: center;
  justify-content: center;
  background: #cde1f3;
  border: 1px solid #a9cbe8;
`;

const Slot = styled.div<{ $w: number }>`
  width: ${(p) => p.$w}px;
  flex-shrink: 0;
  display: flex;
  align-items: center;

  & > * {
    flex-shrink: 0;
    transform: translateX(-50%);
  }
`;

const GripDots = styled.div`
  width: 2px;
  height: 19px;
  background: repeating-linear-gradient(#8e93a0 0 2px, transparent 2px 5px);
`;

const ToolSep = styled.div`
  width: 1px;
  height: 26px;
  background: #8896a6;
`;

const ToolLabel = styled.span`
  white-space: nowrap;
`;

const ToggleOn = styled.div`
  width: 22px;
  height: 22px;
  display: flex;
  align-items: center;
  justify-content: center;
  background: #c3dcf3;
  border: 1px solid #8fbfe8;
`;

const Workspace = styled.div`
  height: 572px;
  flex-shrink: 0;
  display: flex;
  padding-left: 3px;
`;

const ExplorerPanel = styled.div`
  width: 221px;
  margin-right: 6px;
  background: #fff;
  border-radius: 8px;
  display: flex;
  flex-direction: column;
`;

const ExplorerHead = styled.div`
  height: 26px;
  display: flex;
  align-items: center;
  justify-content: space-between;
  background: #f3f5fb;
  border-radius: 8px 8px 0 0;
  padding-right: 14px;
`;

const ExplorerTab = styled.div`
  width: 141px;
  height: 26px;
  display: flex;
  align-items: center;
  gap: 4px;
  padding-left: 9px;
  background: #fff;
  border-radius: 6px 6px 0 0;
  white-space: nowrap;
  letter-spacing: -0.45px;

  & > svg:last-child {
    margin-left: 2px;
  }
`;

const MinMaxRow = styled.div`
  display: flex;
  align-items: center;
  gap: 11px;
`;

const EditorMinMax = styled.div`
  align-self: center;
  padding-right: 9px;
`;

const ExplorerTools = styled.div`
  height: 24px;
  display: flex;
  align-items: center;
  justify-content: flex-end;
  gap: 7px;
  padding-right: 11px;

  & > svg:first-child {
    margin-right: 0;
  }
  & > svg:last-child {
    margin-left: 8px;
  }
`;

const Tree = styled.div`
  display: flex;
  flex-direction: column;
`;

const TreeRow = styled.div<{ $d: number }>`
  height: 18px;
  display: flex;
  align-items: center;
  padding-left: ${(p) => 7 + p.$d * 19}px;
  white-space: nowrap;
`;

const TreeChevron = styled.div`
  width: 12px;
  margin-right: 7px;
  flex-shrink: 0;
`;

const TreeLabel = styled.span<{ $sel?: boolean }>`
  margin-left: ${(p) => (p.$sel ? 0 : 1)}px;
  padding: ${(p) => (p.$sel ? "0 2px 0 3px" : "0 3px")};
  height: 18px;
  line-height: 18px;
  background: ${(p) => (p.$sel ? "#dcdcdc" : "transparent")};
`;

const Muted = styled.span`
  color: #8a8a8a;
`;

const EditorPanel = styled.div`
  width: 1011px;
  background: ${BLUE};
  border-radius: 8px;
  border-bottom: 2px solid #fff;
  border-right: 1px solid #f4f6fb;
  display: flex;
  flex-direction: column;
  overflow: hidden;
`;

const EditorTabs = styled.div`
  height: 26px;
  flex-shrink: 0;
  display: flex;
  align-items: flex-end;
  background: #dbe4f0;
  border-bottom: 1px solid #fff;
`;

const EditorTab = styled.div<{ $active?: boolean }>`
  width: 140px;
  height: 25px;
  display: flex;
  align-items: center;
  gap: 3px;
  padding: 1px 0 0 5px;
  white-space: nowrap;
  background: ${(p) => (p.$active ? "#fff" : "#dbe4f0")};
  border-radius: 6px 6px 0 0;
  border-right: 1px solid #b8c4d2;

  & > svg:last-child:not(:first-child) {
    margin-left: 3px;
  }
`;

const TabFill = styled.div`
  flex: 1;
`;

const EditorBody = styled.div`
  flex: 1;
  display: flex;
  min-height: 0;
`;

const PaletteCol = styled.div`
  width: 200px;
  flex-shrink: 0;
  display: flex;
  flex-direction: column;
  padding: 0 6px 0 0;
`;

const PaneHead = styled.div<{ $right?: boolean }>`
  height: 18px;
  flex-shrink: 0;
  display: flex;
  align-items: center;
  justify-content: ${(p) => (p.$right ? "flex-end" : "flex-start")};
  gap: 5px;
  padding: ${(p) => (p.$right ? "0 5px 0 0" : "0 0 0 6px")};

  & b {
    font-weight: 700;
    letter-spacing: -0.15px;
  }
`;

const GripLines = styled.div`
  width: 30px;
  height: 5px;
  border-top: 1px solid #a9b2bd;
  border-bottom: 1px solid #f6f8fb;
  box-shadow: inset 0 1px 0 #f6f8fb, inset 0 -1px 0 #a9b2bd;
`;

const ArrowL = styled.div`
  width: 0;
  height: 0;
  margin-right: 5px;
  border: 4px solid transparent;
  border-left: 0;
  border-right: 5px solid #1b3558;
`;

const ArrowR = styled.div`
  width: 0;
  height: 0;
  margin-left: 4px;
  border: 4px solid transparent;
  border-right: 0;
  border-left: 5px solid #1b3558;
`;

const PaletteTitle = styled.div`
  height: 24px;
  flex-shrink: 0;
  display: flex;
  align-items: center;
  gap: 3px;
  margin-left: 2px;
  padding: 0 6px 0 1px;
  border: 1px solid #f1f4f8;
  border-bottom-color: #a8afb7;

  & > span {
    flex: 1;
    margin-left: 1px;
  }
`;

const PaletteStack = styled.div`
  flex: 1;
  min-height: 0;
  margin: 1px 0 2px 3px;
  background: #eeeeee;
  display: flex;
  flex-direction: column;
`;

const Category = styled.div`
  height: 22px;
  flex-shrink: 0;
  display: flex;
  align-items: center;
  gap: 5px;
  padding-left: 2px;
  font-weight: 700;
  letter-spacing: -0.2px;
  background: linear-gradient(#fcfcfc, #e4e4e4);
  border: 1px solid #b5b5b5;
  border-top-color: #f5f5f5;
`;

const WidgetArea = styled.div`
  height: 258px;
  flex-shrink: 0;
  display: flex;
  overflow: hidden;
`;

const WidgetList = styled.div`
  flex: 1;
  display: flex;
  flex-direction: column;
`;

const WidgetRow = styled.div`
  height: 22px;
  flex-shrink: 0;
  display: flex;
  align-items: center;
  gap: 5px;
  padding-left: 3px;
`;

const AbBox = styled.span`
  width: 16px;
  height: 15px;
  flex-shrink: 0;
  border: 1px solid #7c7c7c;
  border-radius: 2px;
  background: #fff;
  font-size: 10px;
  line-height: 13px;
  letter-spacing: -0.3px;
  text-align: center;
`;

const OkBox = styled.span`
  width: 16px;
  height: 16px;
  flex-shrink: 0;
  border: 1px solid #b3b3b3;
  border-radius: 2px;
  background: #e6e6e6;
  color: #8a8a8a;
  font-size: 7px;
  font-weight: 700;
  letter-spacing: 0;
  display: flex;
  align-items: center;
  justify-content: center;
`;

const ToggleBar = styled.span`
  width: 10px;
  height: 3px;
  background: #6f9f2f;
`;

const CheckedBox = styled.span`
  width: 16px;
  height: 15px;
  flex-shrink: 0;
  border: 1px solid #7c7c7c;
  border-radius: 2px;
  background: #fff;
  font-size: 9px;
  line-height: 13px;
  letter-spacing: 0;
  text-align: center;
`;

const ProgressIcon = styled.span`
  width: 16px;
  height: 9px;
  margin-bottom: 6px;
  flex-shrink: 0;
  background: linear-gradient(#8ab34a, #5c8a25);
`;

const Scroll = styled.div`
  width: 16px;
  height: 100%;
  display: flex;
  flex-direction: column;
  justify-content: space-between;
  background: linear-gradient(#eeeeee 0 16px, #cdcdcd 16px 148px, #eeeeee 148px);
`;

const ScrollArrow = styled.div`
  height: 16px;
  display: flex;
  align-items: center;
  justify-content: center;
`;

const DesignerCol = styled.div`
  width: 516px;
  flex-shrink: 0;
  padding: 3px 0 0 2px;
  display: flex;
  flex-direction: column;
  min-height: 0;
`;

const DesignRow = styled.div<{ $h: number; $line?: boolean }>`
  height: ${(p) => p.$h}px;
  flex-shrink: 0;
  display: flex;
  align-items: center;
  border-bottom: ${(p) => (p.$line ? "1px solid #a9b3bf" : "0")};
`;

const CanvasFrame = styled.div`
  flex: 1;
  min-height: 0;
  margin-right: 8px;
  border-left: 1px solid #fff;
  display: flex;
  flex-direction: column;
  background: #f0f0f0;
`;

const CanvasMain = styled.div`
  flex: 1;
  min-height: 0;
  display: flex;
`;

const Canvas = styled.div`
  flex: 1;
  position: relative;
  overflow: hidden;
  background: #909090;
  border-top: 2px solid #fff;
`;

const Device = styled.div<{ $x: number; $y: number; $w: number; $h: number }>`
  position: absolute;
  left: ${(p) => p.$x}px;
  top: ${(p) => p.$y}px;
  width: ${(p) => p.$w}px;
  height: ${(p) => p.$h}px;
  background: #fff;
  display: flex;
  flex-direction: column;
  box-shadow: 7px 7px 6px rgba(0, 0, 0, 0.6);
`;

const DeviceLabel = styled.div<{ $x: number; $y: number; $w: number }>`
  position: absolute;
  left: ${(p) => p.$x}px;
  top: ${(p) => p.$y}px;
  width: ${(p) => p.$w}px;
  text-align: center;
  color: #efefef;
  white-space: nowrap;
  line-height: 16px;
  letter-spacing: -0.2px;
`;

const Status = styled.div<{ $h: number; $fs: number }>`
  height: ${(p) => p.$h}px;
  flex-shrink: 0;
  background: #000;
  color: #cfcfcf;
  font-size: ${(p) => p.$fs}px;
  display: flex;
  align-items: center;
  justify-content: flex-end;
  gap: ${(p) => p.$fs / 2}px;
  padding-right: ${(p) => p.$fs / 2}px;
  letter-spacing: 0;
`;

const ActionBar = styled.div<{ $h: number; $fs: number; $pad: number }>`
  height: ${(p) => p.$h}px;
  flex-shrink: 0;
  background: #222;
  color: #ccc;
  display: flex;
  align-items: center;
  gap: ${(p) => p.$pad / 2}px;
  font-size: ${(p) => p.$fs}px;
  padding-left: ${(p) => p.$pad}px;
  letter-spacing: 0;
`;

const Hello = styled.div<{ $fs: number; $pad: number; $top: number }>`
  font-size: ${(p) => p.$fs}px;
  line-height: ${(p) => p.$fs + 1}px;
  padding: ${(p) => p.$top}px 0 0 ${(p) => p.$pad}px;
  color: #555;
  letter-spacing: 0;
`;

const ZoomPad = styled.div`
  position: absolute;
  right: 5px;
  top: 0;
  width: 21px;
  height: 70px;
  background: #999;
  display: flex;
  flex-direction: column;
  align-items: center;
  padding-top: 2px;
`;

const PadClose = styled.span`
  color: #eee;
  font-size: 11px;
  line-height: 18px;
  font-weight: 700;
`;

const CursorBox = styled.div`
  position: absolute;
  left: 85px;
  top: 75px;
`;

const CanvasScroll = styled.div`
  width: 15px;
  flex-shrink: 0;
  background: #eeeeee;
  display: flex;
  flex-direction: column;
  align-items: center;
  padding: 3px 0;
  border-top: 2px solid #fff;
`;

const ThumbFill = styled.div`
  flex: 1;
  width: 15px;
  margin: 2px 0;
  background: #c8c8c8;
`;

const HScroll = styled.div`
  height: 17px;
  flex-shrink: 0;
  display: flex;
  align-items: center;
  justify-content: space-between;
  padding: 0 20px 0 4px;
  background: #eeeeee;
`;

const RightCol = styled.div`
  flex: 1;
  min-width: 0;
  display: flex;
  flex-direction: column;
  border-left: 1px solid #fff;
`;

const OutlineHead = styled.div`
  height: 24px;
  flex-shrink: 0;
  display: flex;
  align-items: center;
  gap: 4px;
  margin: 0 1px;
  border: 1px solid #f1f4f8;
  border-bottom-color: #fff;
`;

const OutlineBody = styled.div`
  height: 226px;
  flex-shrink: 0;
  margin: 0 1px;
  background: #fff;
  border-bottom: 1px solid #999;
`;

const OutlineBand = styled.div`
  height: 16px;
  background: ${BLUE};
`;

const OutlineRow = styled.div<{ $first?: boolean }>`
  height: ${(p) => (p.$first ? 18 : 17)}px;
  display: flex;
  align-items: center;
  gap: 5px;
  padding-left: ${(p) => (p.$first ? 4 : 41)}px;
  white-space: nowrap;
`;

const OutlineSel = styled.div`
  height: 18px;
  width: 101px;
  display: flex;
  align-items: center;
  gap: 5px;
  padding-left: 1px;
  background: #dcdcdc;
`;

const PropHead = styled.div`
  height: 20px;
  flex-shrink: 0;
  margin: 6px 1px 0 1px;
  display: flex;
  align-items: center;
  gap: 6px;
  padding-left: 3px;
`;

const PropTools = styled.div`
  margin-left: auto;
  display: flex;
  align-items: center;
  gap: 7px;
  padding-right: 3px;
`;

const PropSep = styled.div`
  width: 1px;
  height: 16px;
  background: #99a5b3;
`;

const PropTable = styled.div`
  height: 226px;
  flex-shrink: 0;
  margin: 0 2px;
  padding-top: 3px;
  display: flex;
  background: #eeeeee;
  border-bottom: 2px solid #aaa;
  overflow: hidden;
`;

const PropRows = styled.div`
  flex: 1;
  min-width: 0;
  display: flex;
  flex-direction: column;
`;

const PropRow = styled.div`
  height: 17px;
  flex-shrink: 0;
  display: grid;
  grid-template-columns: 109px 148px 15px;
  border-bottom: 1px solid #a9a9a9;
`;

const PropName = styled.div<{ $b?: boolean; $indent?: boolean; $white?: boolean }>`
  position: relative;
  padding-left: ${(p) => (p.$indent ? 27 : 14)}px;
  font-weight: ${(p) => (p.$b ? 700 : 400)};
  line-height: 17px;
  white-space: nowrap;
  background: ${(p) => (p.$white ? "#fff" : "transparent")};
  border-right: 1px solid #a9a9a9;
`;

const TreeBox = styled.span`
  position: absolute;
  left: 1px;
  top: 3px;
  width: 9px;
  height: 9px;
  border: 1px solid #8a8a8a;
  background: #fff;
  font-size: 9px;
  line-height: 7px;
  font-weight: 400;
  text-align: center;
  letter-spacing: 0;
`;

const PropValue = styled.div<{ $white?: boolean }>`
  padding-left: 3px;
  line-height: 17px;
  color: ${(p) => (p.$white ? "#2a2a8a" : "#333")};
  white-space: nowrap;
  background: ${(p) => (p.$white ? "#fff" : "transparent")};
`;

const PropBtn = styled.div`
  display: flex;
  align-items: center;
  justify-content: center;
`;

const DotBtn = styled.span`
  width: 13px;
  height: 14px;
  background: #e6e6e6;
  border: 1px solid #b0b0b0;
  display: flex;
  align-items: center;
  justify-content: center;
`;

const Dots = styled.span`
  width: 8px;
  height: 2px;
  background: repeating-linear-gradient(90deg, #111 0 2px, transparent 2px 3px);
`;

const PropScroll = styled.div`
  width: 17px;
  flex-shrink: 0;
  display: flex;
  flex-direction: column;
  justify-content: space-between;
  background: linear-gradient(#eee 0 16px, #cdcdcd 16px 58px, #eee 58px);
`;

const BottomTabs = styled.div`
  height: 23px;
  flex-shrink: 0;
  display: flex;
  padding-left: 2px;
  border-top: 1px solid #fff;
`;

const BottomTab = styled.div<{ $active?: boolean }>`
  width: ${(p) => (p.$active ? 116 : 120)}px;
  display: flex;
  align-items: center;
  gap: 4px;
  padding-left: 3px;
  white-space: nowrap;
  background: ${(p) => (p.$active ? "#fff" : "transparent")};
  border-right: 1px solid #a9b3bf;
`;

const TrimCol = styled.div`
  width: 32px;
  margin-left: 6px;
  padding-top: 1px;
  display: flex;
  flex-direction: column;
  gap: 9px;
`;

const TrimGroup = styled.div`
  padding: 5px 0 7px;
  background: #eef0f8;
  border: 1px solid #d2d6e2;
  border-radius: 8px;
  display: flex;
  flex-direction: column;
  align-items: center;
  gap: 5.5px;
`;

const TrimDots = styled.div`
  width: 16px;
  height: 2px;
  background: repeating-linear-gradient(90deg, #aaa 0 2px, transparent 2px 4px);
`;

const StatusStrip = styled.div`
  height: 30px;
  flex-shrink: 0;
  display: flex;
  align-items: center;
  padding-left: 995px;
`;

const StatusGrip = styled.div`
  width: 2px;
  height: 20px;
  background: repeating-linear-gradient(#999 0 2px, transparent 2px 5px);
`;

const Taskbar = styled.div`
  height: 40px;
  flex-shrink: 0;
  background: #000;
  display: flex;
  align-items: stretch;
`;

const StartBtn = styled.div`
  width: 39px;
  display: flex;
  align-items: center;
  justify-content: center;
`;

const SearchBox = styled.div`
  width: 353px;
  background: #363636;
  color: #9a9a9a;
  font-size: 14px;
  padding-left: 21px;
  display: flex;
  align-items: center;
  letter-spacing: 0;
  white-space: nowrap;
`;

const TaskSlot = styled.div<{ $w: number; $on?: boolean; $line?: number }>`
  width: ${(p) => p.$w}px;
  flex-shrink: 0;
  display: flex;
  align-items: center;
  justify-content: center;
  background: ${(p) =>
    `${p.$line ? `linear-gradient(#76b9ed, #76b9ed) bottom center / ${p.$line}px 2px no-repeat, ` : ""}${p.$on ? "#333" : "transparent"}`};
`;

const Tray = styled.div`
  margin-left: auto;
  display: flex;
  align-items: center;
  gap: 8px;
  padding-right: 16px;
  color: #fff;
`;

const Clock = styled.div`
  margin-left: 6px;
  display: flex;
  flex-direction: column;
  align-items: flex-end;
  font-size: 12px;
  line-height: 17px;
  letter-spacing: -0.35px;
`;
